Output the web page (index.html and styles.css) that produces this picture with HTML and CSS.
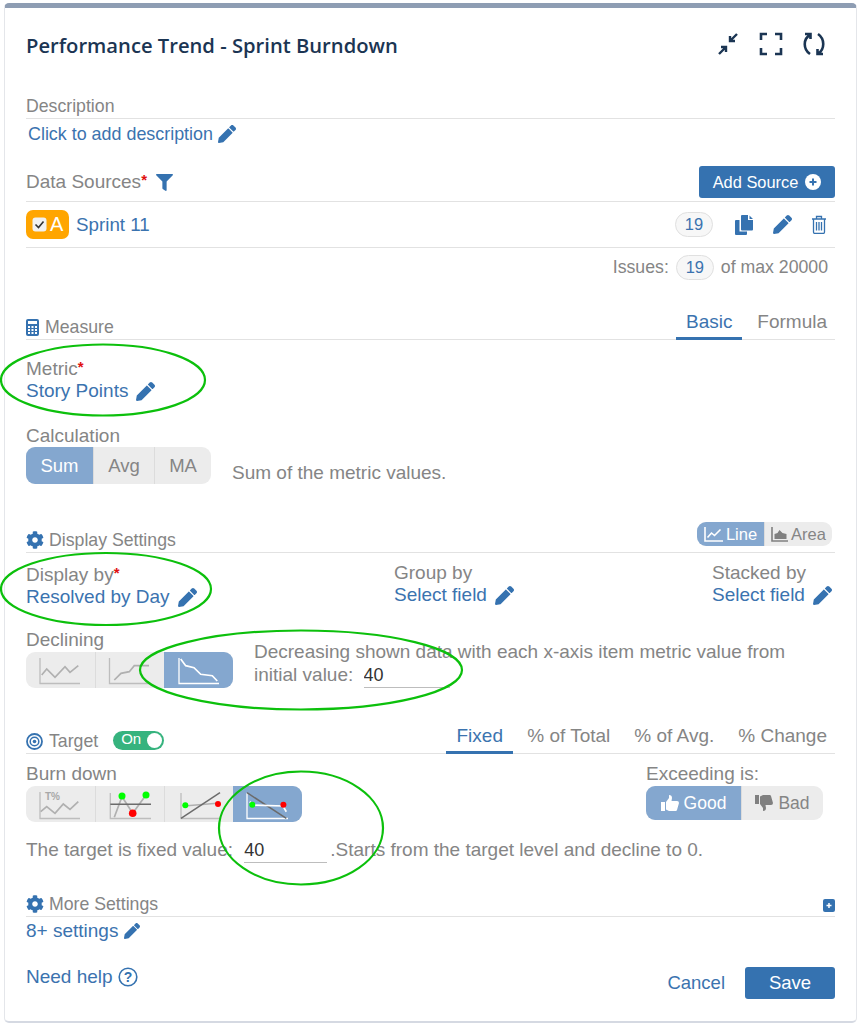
FILE: index.html
```html
<!DOCTYPE html>
<html lang="en">
<head>
  <meta charset="UTF-8" />
  <title>Performance Trend - Sprint Burndown</title>
  <link rel="stylesheet" href="styles.css">
</head>
<body>
  <svg class="defs">
    <symbol id="pencil" viewBox="0 0 512 512"><path d="M497.9 142.1l-46.1 46.1c-4.7 4.7-12.3 4.7-17 0l-111-111c-4.7-4.7-4.7-12.3 0-17l46.1-46.1c18.7-18.7 49.1-18.7 67.9 0l60.1 60.1c18.8 18.7 18.8 49.1 0 67.9zM284.2 99.8L21.6 362.4.4 483.9c-2.9 16.4 11.4 30.6 27.8 27.8l121.5-21.3 262.6-262.6c4.7-4.7 4.7-12.3 0-17l-111-111c-4.8-4.7-12.4-4.7-17.1 0z"/></symbol>
    <symbol id="cog" viewBox="0 0 512 512"><path d="M487.4 315.7l-42.6-24.6c4.3-23.2 4.3-47 0-70.2l42.6-24.6c4.9-2.8 7.1-8.6 5.5-14-11.1-35.6-30-67.8-54.7-94.6-3.8-4.1-10-5.1-14.8-2.3L380.8 110c-17.9-15.4-38.5-27.3-60.8-35.1V25.8c0-5.6-3.9-10.5-9.4-11.7-36.7-8.2-74.3-7.8-109.2 0-5.5 1.2-9.4 6.1-9.4 11.7V75c-22.2 7.9-42.8 19.8-60.8 35.1L88.7 85.5c-4.9-2.8-11-1.9-14.8 2.3-24.7 26.7-43.6 58.9-54.7 94.6-1.7 5.4.6 11.2 5.5 14L67.3 221c-4.3 23.2-4.3 47 0 70.2l-42.6 24.6c-4.9 2.8-7.1 8.6-5.5 14 11.1 35.6 30 67.8 54.7 94.6 3.8 4.1 10 5.1 14.8 2.3l42.6-24.6c17.9 15.4 38.5 27.3 60.8 35.1v49.2c0 5.6 3.9 10.5 9.4 11.7 36.7 8.2 74.3 7.8 109.2 0 5.5-1.2 9.4-6.1 9.4-11.7v-49.2c22.2-7.9 42.8-19.8 60.8-35.1l42.6 24.6c4.9 2.8 11 1.9 14.8-2.3 24.7-26.7 43.6-58.9 54.7-94.6 1.5-5.5-.7-11.3-5.6-14.1zM256 336c-44.1 0-80-35.9-80-80s35.9-80 80-80 80 35.9 80 80-35.9 80-80 80z"/></symbol>
  </svg>

  <div class="card">
    <div class="title-row">
      <h1>Performance Trend - Sprint Burndown</h1>
      <div class="title-icons">
        <svg width="24" height="24" viewBox="0 0 24 24" fill="none" stroke="#1b3553" stroke-width="2.4"><path d="M21 2l-7 7M14 4v5h5M3 22l7-7M5 15h5v5"/></svg>
        <svg width="24" height="24" viewBox="0 0 24 24" fill="none" stroke="#1b3553" stroke-width="2.6"><path d="M8 2H2v6M16 2h6v6M2 16v6h6M22 16v6h-6"/></svg>
        <svg width="24" height="24" viewBox="0 0 24 24" fill="none" stroke="#1b3553" stroke-width="2.6"><path d="M8 22C1 17 1 7 8 3M3 2h5.500v5M16 2c7 5 7 15 0 20M21 22h-5.500v-5"/></svg>
      </div>
    </div>

    <div class="sec-head sec-desc"><span class="sec-label">Description</span></div>
    <div class="link-row desc-link"><a>Click to add description</a><svg class="pen"><use href="#pencil"/></svg></div>

    <div class="sec-head sec-sources">
      <span class="sec-label sources-label">Data Sources<i class="req">*</i></span>
      <svg class="filter" viewBox="0 0 512 512"><path d="M487.976 0H24.028C2.71 0-8.047 25.866 7.058 40.971L192 225.941V432c0 7.831 3.821 15.17 10.237 19.662l80 55.98C298.02 518.69 320 507.493 320 487.98V225.941l184.947-184.97C520.021 25.896 509.338 0 487.976 0z"/></svg>
      <button class="btn add-source">Add Source
        <svg width="16" height="16" viewBox="0 0 16 16"><circle cx="8" cy="8" r="8" fill="#fff"/><path d="M4.500 8h7M8 4.500v7" stroke="#3572b0" stroke-width="2"/></svg>
      </button>
    </div>

    <div class="source-row">
      <span class="source-tag">
        <svg width="15" height="15" viewBox="0 0 15 15"><rect x=".5" y=".5" width="14" height="14" rx="3" fill="#f1f1f1"/><path d="M3.500 7.500l3 3 5-6" fill="none" stroke="#333" stroke-width="1.600"/></svg>A
      </span>
      <a class="source-name">Sprint 11</a>
      <span class="pill source-pill">19</span>
      <svg class="row-icon" width="19" height="20" viewBox="0 0 19 20" fill="#3572b0"><path d="M7 0h6v5h5v9.500a1 1 0 0 1-1 1H7a1 1 0 0 1-1-1V1a1 1 0 0 1 1-1zM14.500 .5L18 4h-3.500zM1 5h3.500v11.500H12V19a1 1 0 0 1-1 1H1a1 1 0 0 1-1-1V6a1 1 0 0 1 1-1z"/></svg>
      <svg class="row-icon pen-lg" fill="#3572b0"><use href="#pencil"/></svg>
      <svg class="row-icon" width="16" height="19" viewBox="0 0 16 19" fill="none" stroke="#3572b0" stroke-width="1.300"><path d="M1 4h14M5.500 4V1.500h5V4M2.500 4v13a1.500 1.500 0 0 0 1.500 1.500h8a1.500 1.500 0 0 0 1.500-1.500V4M5.500 7v8.500M8 7v8.500M10.500 7v8.500"/></svg>
    </div>

    <div class="issues-row">Issues: <span class="pill">19</span> of max 20000</div>

    <div class="sec-head sec-measure">
      <svg class="sec-icon" width="13" height="17" viewBox="0 0 13 17"><rect width="13" height="17" rx="2" fill="#3572b0"/><rect x="2" y="2" width="9" height="3" fill="#fff"/><path d="M2 7h2v2H2zM5.500 7h2v2h-2zM9 7h2v2H9zM2 10h2v2H2zM5.500 10h2v2h-2zM9 10h2v2H9zM2 13h2v2H2zM5.500 13h2v2h-2zM9 13h2v2H9z" fill="#fff"/></svg>
      <span class="sec-label">Measure</span>
      <div class="tabs">
        <span class="tab active tab-basic">Basic</span>
        <span class="tab">Formula</span>
      </div>
    </div>

    <div class="field metric">
      <div class="label">Metric<i class="req">*</i></div>
      <div class="link-row"><a>Story Points</a><svg class="pen pen-md"><use href="#pencil"/></svg></div>
    </div>

    <div class="label calc-label">Calculation</div>
    <div class="calc-row">
      <div class="seg">
        <span class="seg-item active sum">Sum</span>
        <span class="seg-item avg">Avg</span>
        <span class="seg-item ma">MA</span>
      </div>
      <span class="hint calc-hint">Sum of the metric values.</span>
    </div>

    <div class="sec-head sec-display">
      <svg class="sec-icon cog"><use href="#cog"/></svg>
      <span class="sec-label">Display Settings</span>
      <div class="seg seg-mini">
        <span class="seg-item active">
          <svg width="19" height="15" viewBox="0 0 19 15" fill="none" stroke="#fff" stroke-width="1.600"><path d="M1 0v14h18M3.500 10.500l4-4.500 3 2.500 6-6"/></svg>Line</span>
        <span class="seg-item">
          <svg width="17" height="15" viewBox="0 0 17 15"><path d="M1 0v14h16" fill="none" stroke="#808080" stroke-width="1.600"/><path d="M3.500 12V7l3-1 2-3 3 3 4 1v5z" fill="#808080"/></svg>Area</span>
      </div>
    </div>

    <div class="display-grid">
      <div>
        <div class="label">Display by<i class="req">*</i></div>
        <div class="link-row"><a>Resolved by Day</a><svg class="pen pen-md"><use href="#pencil"/></svg></div>
      </div>
      <div>
        <div class="label">Group by</div>
        <div class="link-row"><a>Select field</a><svg class="pen pen-md"><use href="#pencil"/></svg></div>
      </div>
      <div>
        <div class="label">Stacked by</div>
        <div class="link-row"><a>Select field</a><svg class="pen pen-md"><use href="#pencil"/></svg></div>
      </div>
    </div>

    <div class="declining">
      <div>
        <div class="label">Declining</div>
        <div class="seg seg-charts">
          <span class="seg-item">
            <svg class="chart" viewBox="0 0 69 36"><path class="axis" d="M14 6v25.500h40"/><path class="plot" d="M15.700 23l5-6 8.300 8.300 10-10.600 5 5.600 8.300-6.600"/></svg>
          </span>
          <span class="seg-item">
            <svg class="chart" viewBox="0 0 69 36"><path class="axis" d="M13.500 6v25.500h40"/><path class="plot" d="M18.300 28l6.700-6.700 8.300-1.600 5-6h14.700"/></svg>
          </span>
          <span class="seg-item active">
            <svg class="chart" viewBox="0 0 69 36"><path class="axis white" d="M15 6v25.500h40"/><path class="plot white" d="M16.700 7l5 6.700 8.300 2 6.700 6.600 11.600 1.400 5 5.300"/></svg>
          </span>
        </div>
      </div>
      <div class="hint declining-hint">
        Decreasing shown data with each x-axis item metric value from<br>
        initial value: <input class="num-input wide" value="40">
      </div>
    </div>

    <div class="sec-head sec-target">
      <svg class="sec-icon" width="17" height="17" viewBox="0 0 17 17" fill="none" stroke="#3572b0"><circle cx="8.500" cy="8.500" r="7.500" stroke-width="1.800"/><circle cx="8.500" cy="8.500" r="4.300" stroke-width="1.500"/><circle cx="8.500" cy="8.500" r="1.800" fill="#3572b0" stroke="none"/></svg>
      <span class="sec-label">Target</span>
      <span class="toggle">On<i class="knob"></i></span>
      <div class="tabs tabs-target">
        <span class="tab active tab-fixed">Fixed</span>
        <span class="tab">% of Total</span>
        <span class="tab">% of Avg.</span>
        <span class="tab">% Change</span>
      </div>
    </div>

    <div class="burn-row">
      <div>
        <div class="label">Burn down</div>
        <div class="seg seg-charts">
          <span class="seg-item">
            <svg class="chart" viewBox="0 0 69 36"><path class="axis" d="M14 6v26.500h40"/><text class="chart-pct" x="19" y="14">T%</text><path class="plot" d="M14.700 25.700l6-5 8.300 6.600 8.300-9.300 6.700 5.300 8.300-7.600"/></svg>
          </span>
          <span class="seg-item">
            <svg class="chart" viewBox="0 0 69 36"><path class="axis" d="M14.300 7v25.500H55"/><path class="plot" d="M18.300 31.300L26 10.700l10.700 16.600L50 9"/><path class="dark" d="M14.300 18.300H55"/><circle cx="26" cy="10" r="3.500" fill="#0f0"/><circle cx="36.700" cy="27.300" r="3.800" fill="#f00"/><circle cx="50" cy="9" r="3.500" fill="#0f0"/></svg>
          </span>
          <span class="seg-item">
            <svg class="chart" viewBox="0 0 69 36"><path class="axis" d="M16 7v25.500h39"/><path class="plot" d="M19 20l36-3"/><path class="dark" d="M16 32.300L55 6.700"/><circle cx="20.300" cy="19.300" r="3" fill="#0f0"/><circle cx="53" cy="18" r="3" fill="#f00"/></svg>
          </span>
          <span class="seg-item active">
            <svg class="chart" viewBox="0 0 69 36"><path class="axis white" d="M14 7v25.500h41"/><path class="dark" d="M14 6.700l39.300 25.600"/><path class="plot white" d="M16.700 15.700l3.300 3.300 30 1 3.300 5.700"/><circle cx="19.300" cy="18.700" r="3" fill="#0f0"/><circle cx="50.400" cy="18.700" r="3" fill="#f00"/></svg>
          </span>
        </div>
      </div>
      <div class="exceeding">
        <div class="label">Exceeding is:</div>
        <div class="seg seg-good">
          <span class="seg-item active">
            <svg width="18" height="16" viewBox="0 0 18 16" fill="#fff"><path d="M0 7h4v9H0zM5 7l3-4V0c2 0 3 1 3 3l-.5 3H16a2 2 0 0 1 2 2l-2 7a1.500 1.500 0 0 1-1.500 1H8l-3-1.500z"/></svg>Good</span>
          <span class="seg-item">
            <svg width="18" height="16" viewBox="0 0 18 16" fill="#808080"><path d="M0 0h4v9H0zM5 9l3 4v3c2 0 3-1 3-3l-.5-3H16a2 2 0 0 0 2-2l-2-7a1.500 1.500 0 0 0-1.500-1H8L5 1.500z"/></svg>Bad</span>
        </div>
      </div>
    </div>

    <div class="hint target-line">The target is fixed value: <input class="num-input" value="40">.Starts from the target level and decline to 0.</div>

    <div class="sec-head sec-more">
      <svg class="sec-icon cog"><use href="#cog"/></svg>
      <span class="sec-label">More Settings</span>
      <svg class="more-plus" width="12" height="13" viewBox="0 0 12 13"><rect width="12" height="13" rx="2" fill="#3572b0"/><path d="M3.500 6.500h5M6 4v5" stroke="#fff" stroke-width="1.500"/></svg>
    </div>
    <div class="link-row more-link"><a>8+ settings</a><svg class="pen pen-sm"><use href="#pencil"/></svg></div>

    <div class="footer">
      <a class="help">Need help
        <svg width="20" height="20" viewBox="0 0 20 20"><circle cx="10" cy="10" r="8.800" fill="none" stroke="#3572b0" stroke-width="1.600"/><text x="10" y="15" text-anchor="middle" class="help-mark">?</text></svg>
      </a>
      <div class="footer-actions">
        <a class="cancel">Cancel</a>
        <button class="btn save">Save</button>
      </div>
    </div>
  </div>

  <!-- green marks drawn over the screenshot -->
  <svg class="marks" width="862" height="1024" fill="none" stroke="#0cc00c" stroke-width="2.200">
    <ellipse cx="103" cy="380" rx="102" ry="35.500"/>
    <ellipse cx="106" cy="589" rx="105" ry="36"/>
    <ellipse cx="301" cy="670" rx="161" ry="39.500"/>
    <ellipse cx="301" cy="828" rx="82" ry="56.500"/>
  </svg>
</body>
</html>
```

FILE: styles.css
```css
body {
  margin: 0;
  font-family: "Liberation Sans", Arial, sans-serif;
  background-color: #fff;
  color: #858585;
  font-size: 19px;
}

a {
  color: #3b73af;
}

.defs {
  display: none;
}

.card {
  margin: 3px 0 0 4px;
  width: 853px;
  box-sizing: border-box;
  border: 1px solid #e4e6ea;
  border-top: 5px solid #8e9db3;
  border-bottom: 2px solid #d5d9e2;
  border-radius: 5px;
  padding: 0 21px 22px;
}

/* title */
.title-row {
  height: 76px;
  display: flex;
  align-items: center;
  justify-content: space-between;
}

h1 {
  margin: 0 0 2px;
  font-family: "Open Sans", sans-serif;
  font-size: 20.200px;
  font-weight: 600;
  color: #1b3553;
}

.title-icons {
  display: flex;
  gap: 19px;
  margin-right: 9px;
  margin-top: -4px;
}

/* section heads */
.sec-head {
  display: flex;
  align-items: flex-end;
  border-bottom: 1px solid #e2e2e2;
  line-height: 24px;
}

.sec-desc {
  height: 34px;
}

.sec-sources {
  margin-top: 17px;
  height: 35px;
  align-items: flex-start;
}

.sec-measure {
  margin-top: 14px;
  height: 39px;
}

.sec-display {
  margin-top: 38px;
  height: 30px;
}

.sec-target {
  margin-top: 32px;
  height: 33px;
}

.sec-more {
  margin-top: 29px;
  height: 24px;
}

.sec-label {
  font-size: 17.700px;
}

.sec-label.sources-label {
  line-height: 27px;
  font-size: 19px;
}

.sec-icon {
  flex: none;
  margin: 0 6px 3px 0;
}

.sec-icon.cog {
  width: 18px;
  height: 18px;
  margin-right: 5px;
  fill: #3572b0;
}

.req {
  color: #e01010;
  font-style: normal;
  font-size: 15px;
  vertical-align: 3px;
  font-weight: bold;
}

.filter {
  width: 19px;
  height: 17px;
  fill: #3572b0;
  margin: 8px 0 0 8px;
}

.btn {
  font-family: inherit;
  background-color: #3572b0;
  color: #fff;
  border: none;
  border-radius: 3px;
  cursor: pointer;
}

.add-source {
  margin-left: auto;
  height: 32px;
  width: 136px;
  font-size: 16.400px;
  display: flex;
  align-items: center;
  justify-content: center;
  gap: 7px;
}

/* links with a pencil */
.link-row {
  display: flex;
  align-items: center;
  line-height: 22px;
}

.desc-link {
  height: 30px;
  padding-left: 2px;
  font-size: 17.900px;
}

.pen {
  width: 18px;
  height: 18px;
  fill: #3572b0;
  margin-left: 5px;
}

.pen-md {
  width: 19px;
  height: 19px;
  margin-left: 8px;
}

.pen-sm {
  width: 16px;
  height: 16px;
  margin-left: 6px;
}

/* data source row */
.source-row {
  height: 45px;
  display: flex;
  align-items: center;
  border-bottom: 1px solid #e2e2e2;
}

.source-tag {
  width: 43px;
  height: 29px;
  box-sizing: border-box;
  padding-left: 6px;
  display: flex;
  align-items: center;
  gap: 3px;
  background-color: #ffa500;
  border-radius: 7px;
  color: #fff;
  font-size: 20px;
  margin-right: 7px;
}

.source-name {
  font-size: 18.800px;
}

.pill {
  display: inline-block;
  width: 38px;
  height: 25px;
  box-sizing: border-box;
  border: 1px solid #e0e0e0;
  border-radius: 13px;
  background-color: #f7f7f7;
  color: #3b73af;
  font-size: 16.500px;
  line-height: 23px;
  text-align: center;
}

.source-pill {
  margin-left: auto;
  margin-right: 22px;
}

.row-icon {
  margin-right: 19px;
}

.row-icon:last-child {
  margin-right: 8px;
}

.pen-lg {
  width: 19px;
  height: 19px;
}

.issues-row {
  height: 38px;
  display: flex;
  align-items: center;
  justify-content: flex-end;
  gap: 7px;
  padding-right: 7px;
  font-size: 17.700px;
}

/* tabs */
.tabs {
  margin-left: auto;
  display: flex;
  margin-bottom: -1px;
}

.tab {
  height: 33px;
  box-sizing: border-box;
  line-height: 30px;
  padding: 0 8px;
  border-bottom: 3px solid transparent;
  font-size: 19px;
}

.tab.active {
  color: #3b73af;
  border-bottom-color: #3572b0;
}

.tab-basic {
  width: 66px;
  text-align: center;
  margin-right: 7px;
}

.tabs-target {
  gap: 8px;
}

.tab-fixed {
  width: 67px;
  text-align: center;
  margin-right: -2px;
}

/* plain fields */
.label {
  font-size: 19px;
  line-height: 23px;
}

.metric {
  margin-top: 15px;
}

.calc-label {
  margin-top: 22px;
}

.calc-row {
  display: flex;
  align-items: flex-end;
  gap: 21px;
}

.hint {
  font-size: 19px;
  line-height: 23px;
}

/* segmented buttons */
.seg {
  display: flex;
  background-color: #ececec;
  border-radius: 9px;
  overflow: hidden;
  font-size: 18.500px;
}

.seg-item {
  display: flex;
  align-items: center;
  justify-content: center;
  border-left: 1px solid #dcdcdc;
  box-sizing: border-box;
}

.seg-item:first-child {
  border-left: none;
}

.seg-item.active {
  background-color: #84a7cf;
  color: #fff;
  border-left: none;
}

.calc-row .seg {
  height: 37px;
}

.sum {
  width: 67px;
}

.avg {
  width: 61px;
}

.ma {
  width: 57px;
}

.seg-mini {
  margin-left: auto;
  margin-right: 3px;
  margin-bottom: 6px;
  height: 24px;
  font-size: 16.500px;
}

.seg-mini .seg-item {
  gap: 3px;
}

.seg-mini .seg-item:first-child {
  width: 67px;
}

.seg-mini .seg-item:last-child {
  width: 68px;
}

.seg-charts {
  margin-top: 1px;
  height: 36px;
  width: fit-content;
}

.seg-charts .seg-item {
  width: 69px;
}

.chart {
  width: 69px;
  height: 36px;
  fill: none;
  flex: none;
}

.axis {
  stroke: #bdbdbd;
  stroke-width: 1.300;
}

.plot {
  stroke: #b0b0b0;
  stroke-width: 1.700;
}

.axis.white,
.plot.white {
  stroke: #fff;
}

.dark {
  stroke: #6b6b6b;
  stroke-width: 1.500;
}

.chart-pct {
  font-size: 10px;
  font-weight: bold;
  fill: #a8a8a8;
}

.display-grid {
  margin-top: 9px;
  display: grid;
  grid-template-columns: 368px 318px 1fr;
}

.display-grid .label {
  line-height: 22px;
}

/* declining row */
.declining {
  margin-top: 21px;
  display: flex;
  gap: 21px;
}

.declining .label {
  line-height: 22px;
}

.declining-hint {
  padding-top: 11px;
}

.num-input {
  width: 83px;
  height: 24px;
  box-sizing: border-box;
  border: none;
  border-bottom: 1px solid #bdbdbd;
  outline: none;
  padding: 0;
  margin: 0 3px 0 6px;
  font-family: inherit;
  font-size: 18px;
  color: #333;
}

.num-input.wide {
  width: 86px;
  margin-left: 5px;
}

/* target */
.toggle {
  width: 51px;
  height: 19px;
  box-sizing: border-box;
  margin: 0 0 3px 15px;
  padding-left: 8px;
  border-radius: 10px;
  background-color: #36b37e;
  color: #fff;
  font-size: 15px;
  line-height: 16px;
  position: relative;
}

.knob {
  position: absolute;
  right: 2px;
  top: 2px;
  width: 15px;
  height: 15px;
  border-radius: 50%;
  background-color: #fff;
}

.burn-row {
  margin-top: 9px;
  display: flex;
  justify-content: space-between;
}

.burn-row .label {
  line-height: 22px;
}

.exceeding {
  margin-right: 12px;
  width: 177px;
}

.seg-good {
  margin-top: 1px;
  height: 34px;
  font-size: 17.500px;
}

.seg-good .seg-item {
  gap: 5px;
}

.seg-good .seg-item:first-child {
  width: 95px;
}

.seg-good .seg-item:last-child {
  width: 82px;
}

.target-line {
  margin-top: 16px;
}

.more-plus {
  margin: 0 0 4px auto;
}

.more-link {
  margin-top: 2px;
  height: 24px;
  font-size: 19px;
}

/* footer */
.footer {
  margin-top: 24px;
  display: flex;
  justify-content: space-between;
  align-items: flex-start;
}

.help {
  display: flex;
  align-items: center;
  gap: 5px;
  line-height: 20px;
  font-size: 19px;
}

.help-mark {
  font-size: 14px;
  font-weight: bold;
  fill: #3572b0;
}

.footer-actions {
  display: flex;
  align-items: center;
  gap: 20px;
}

.cancel {
  font-size: 18.500px;
}

.save {
  width: 90px;
  height: 32px;
  font-size: 18.500px;
}

.marks {
  position: absolute;
  left: 0;
  top: 0;
  pointer-events: none;
}
```
